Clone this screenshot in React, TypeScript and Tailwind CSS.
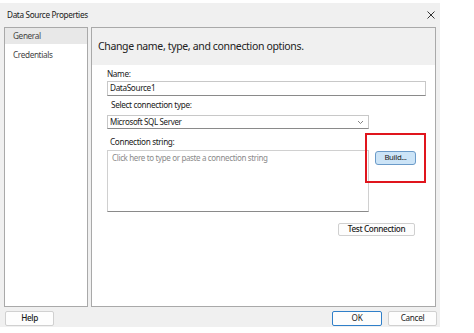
import React from 'react';

export default function App() {
  return (
    <div className="w-[474px] h-[333px] bg-white overflow-hidden text-[#1a1a1a] tracking-[-0.35px]" style={{ fontFamily: '"Noto Sans", "Open Sans", sans-serif' }}>
      <div className="mt-[3px] w-[440px] h-[324px] bg-[#f0f0f0] flex flex-col">
        {/* TITLE BAR */}
        <div className="h-[24px] flex items-center justify-between pl-[7px] pr-[3px]">
          <span className="text-[8.2px] leading-none">Data Source Properties</span>
          <svg width="12" height="12" viewBox="0 0 12 12" className="text-[#333]">
            <path d="M2.5 2.5 L9.5 9.5 M9.5 2.5 L2.5 9.5" stroke="currentColor" strokeWidth="1" />
          </svg>
        </div>

        {/* BODY */}
        <div className="flex gap-[3px] px-[4px] h-[280px]">
          {/* NAV */}
          <div className="w-[86px] h-full bg-white border border-[#a9a9a9] flex flex-col">
            <div className="h-[16px] bg-[#e8e8e8] flex items-center pl-[8px] text-[8.2px] text-[#444]">General</div>
            <div className="h-[22px] flex items-center pl-[8px] text-[8.2px] text-[#444]">Credentials</div>
          </div>

          {/* MAIN */}
          <div className="flex-1 h-full bg-white border border-[#a9a9a9] flex flex-col">
            <div className="h-[37px] bg-[#f0f0f0] flex items-center pl-[6px] text-[10.5px] text-[#222]">
              Change name, type, and connection options.
            </div>
            <div className="flex flex-col pl-[15px] pr-[9px] pt-[2px]">
              <span className="text-[8.2px] h-[14px] flex items-center">Name:</span>
              <div className="h-[15px] border border-[#c8c8c8] border-b-[#8a8a8a] flex items-center pl-[2px] text-[8.2px]">DataSource1</div>

              <span className="text-[8.2px] h-[14px] mt-[2px] flex items-center pl-[4px]">Select connection type:</span>
              <div className="mt-[3px] flex">
                <div className="w-[262px] h-[14px] border border-[#c8c8c8] border-b-[#8a8a8a] flex items-center justify-between pl-[2px] pr-[4px] text-[8px]">
                  <span>Microsoft SQL Server</span>
                  <svg width="7" height="5" viewBox="0 0 7 5">
                    <path d="M1 1 L3.5 3.5 L6 1" fill="none" stroke="#666" strokeWidth="0.8" />
                  </svg>
                </div>
              </div>

              <div className="flex">
                <div className="flex flex-col">
                  <span className="text-[8.2px] h-[14px] mt-[6px] flex items-center pl-[3px]">Connection string:</span>
                  <div className="w-[262px] h-[62px] mt-[1px] border border-[#d0d0d0] border-b-[#8a8a8a] pl-[4px] pt-[1px] text-[8px] text-[#8a8a8a]">
                    Click here to type or paste a connection string
                  </div>
                </div>
                <div className="mt-[4px] ml-[-4px] w-[61px] h-[50px] border-2 border-[#e0151d] flex items-start justify-center pt-[16px]">
                  <div className="w-[41px] h-[14px] rounded-[3px] bg-[#cce4f7] border border-[#6b9bc9] flex items-center justify-center text-[7.8px]">Build...</div>
                </div>
              </div>

              <div className="flex mt-[11px] pl-[231px]">
                <div className="w-[77px] h-[13px] bg-[#fdfdfd] border border-[#d0d0d0] rounded-[2px] flex items-center justify-center text-[8.2px] font-medium">Test Connection</div>
              </div>
            </div>
          </div>
        </div>

        {/* FOOTER */}
        <div className="flex items-center justify-between pl-[5px] pr-[3px] mt-[4px]">
          <div className="w-[49px] h-[15px] bg-[#fdfdfd] border border-[#d0d0d0] rounded-[2px] flex items-center justify-center text-[8.2px] font-medium">Help</div>
          <div className="flex gap-[6px]">
            <div className="w-[50px] h-[15px] bg-[#fdfdfd] border border-[#2f7fc9] rounded-[2px] flex items-center justify-center text-[8.2px]">OK</div>
            <div className="w-[49px] h-[15px] bg-[#fdfdfd] border border-[#d0d0d0] rounded-[2px] flex items-center justify-center text-[8.2px]">Cancel</div>
          </div>
        </div>
      </div>
    </div>
  );
}
